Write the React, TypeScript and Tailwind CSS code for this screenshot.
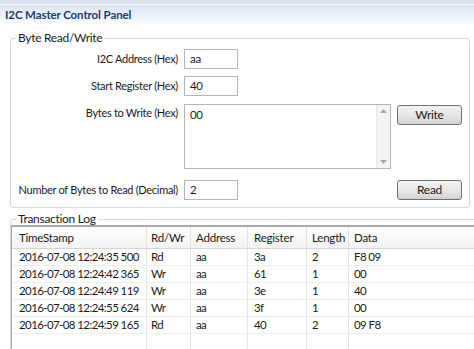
import React from "react";

interface LogRow {
  time: string;
  rw: string;
  address: string;
  register: string;
  length: string;
  data: string;
}

const rows: LogRow[] = [
  { time: "2016-07-08 12:24:35 500", rw: "Rd", address: "aa", register: "3a", length: "2", data: "F8 09" },
  { time: "2016-07-08 12:24:42 365", rw: "Wr", address: "aa", register: "61", length: "1", data: "00" },
  { time: "2016-07-08 12:24:49 119", rw: "Wr", address: "aa", register: "3e", length: "1", data: "40" },
  { time: "2016-07-08 12:24:55 624", rw: "Wr", address: "aa", register: "3f", length: "1", data: "00" },
  { time: "2016-07-08 12:24:59 165", rw: "Rd", address: "aa", register: "40", length: "2", data: "09 F8" },
];

const cols = [
  { key: "time", label: "TimeStamp", w: "w-[135px]", pl: "pl-[7px]" },
  { key: "rw", label: "Rd/Wr", w: "w-[44px]", pl: "pl-[4px]" },
  { key: "address", label: "Address", w: "w-[57px]", pl: "pl-[5px]" },
  { key: "register", label: "Register", w: "w-[59px]", pl: "pl-[6px]" },
  { key: "length", label: "Length", w: "w-[42px]", pl: "pl-[5px]" },
  { key: "data", label: "Data", w: "flex-1", pl: "pl-[5px]" },
] as const;

const WinButton: React.FC<{ label: string }> = ({ label }) => (
  <button className="w-[65px] h-[20px] rounded-[3px] border border-[#707070] bg-linear-to-b from-[#f3f3f3] via-[#e6e6e6] to-[#d3d3d3] text-[#1e1e1e] leading-[18px] text-[12px]">
    {label}
  </button>
);

const TextBox: React.FC<{ value: string }> = ({ value }) => (
  <div className="w-[54px] h-[20px] border border-[#b3b5ba] bg-white pl-[5px] leading-[18px] text-[#1e1e1e] text-[11.5px]">
    {value}
  </div>
);

export default function App() {
  return (
    <div className="w-[474px] h-[349px] overflow-hidden bg-white text-[11px] tracking-[-0.3px] whitespace-nowrap text-[#1a1a1a] font-['Lato',sans-serif]">
      {/* title bar */}
      <div className="h-[4px] bg-[#d9e2ec]" />
      <div className="h-[1px] bg-[#f6f8fb]" />
      <div className="h-[19px] bg-linear-to-b from-[#dbe5f0] to-[#fafcfe] pl-[5px] leading-[19px] text-[11.5px] font-bold tracking-[-0.1px] text-[#1d3a6c]">
        I2C Master Control Panel
      </div>

      {/* Byte Read/Write */}
      <fieldset className="mt-[7px] ml-[10px] w-[460px] rounded-[3px] border border-[#d3dce3] pt-[4px] pb-[7px]">
        <legend className="ml-[5px] px-[2px] leading-[14px] text-[12px]">Byte Read/Write</legend>
        <div className="flex flex-col">
          <div className="flex items-center">
            <div className="w-[167px] text-right">I2C Address (Hex)</div>
            <div className="ml-[6px]"><TextBox value="aa" /></div>
          </div>
          <div className="flex items-center mt-[7px]">
            <div className="w-[167px] text-right">Start Register (Hex)</div>
            <div className="ml-[6px]"><TextBox value="40" /></div>
          </div>
          <div className="flex items-start mt-[8px]">
            <div className="w-[167px] text-right pt-[1px]">Bytes to Write (Hex)</div>
            <div className="ml-[6px] w-[207px] h-[65px] border border-[#b3b5ba] flex">
              <div className="flex-1 pl-[5px] pt-[2px] leading-[16px] text-[11.5px]">00</div>
              <div className="w-[14px] bg-[#f4f4f4] border-l border-[#e8e8e8] flex flex-col justify-between items-center py-[4px]">
                <svg width="7" height="4" viewBox="0 0 7 4"><path d="M0 4 L3.5 0 L7 4 Z" fill="#a8a8a8" /></svg>
                <svg width="7" height="4" viewBox="0 0 7 4"><path d="M0 0 L3.5 4 L7 0 Z" fill="#a8a8a8" /></svg>
              </div>
            </div>
            <div className="ml-[6px] mt-[1px]"><WinButton label="Write" /></div>
          </div>
          <div className="flex items-center mt-[11px]">
            <div className="w-[167px] text-right">Number of Bytes to Read (Decimal)</div>
            <div className="ml-[6px] w-[207px]"><TextBox value="2" /></div>
            <div className="ml-[6px]"><WinButton label="Read" /></div>
          </div>
        </div>
      </fieldset>

      {/* Transaction Log */}
      <fieldset className="mt-[4px] ml-[10px] w-[480px] h-[150px] rounded-[3px] border border-[#d3dce3]">
        <legend className="ml-[5px] px-[2px] leading-[14px] text-[12px]">Transaction Log</legend>
        <div className="-mt-[1px] h-full border-t-2 border-l border-[#a8a8a8] flex flex-col text-[11.5px] tracking-[-0.6px]">
          <div className="flex h-[22px] border-b border-[#d5d5d5] bg-linear-to-b from-white to-[#f2f2f2] tracking-[-0.2px]">
            {cols.map((c, i) => (
              <div
                key={c.key}
                className={`${c.w} ${c.pl} leading-[21px] ${i < cols.length - 1 ? "border-r border-[#e2e2e2]" : ""}`}
              >
                {c.label}
              </div>
            ))}
          </div>
          <div className="flex-1 relative flex flex-col">
            {rows.map((r) => (
              <div key={r.time} className="flex h-[17px] border-b border-[#efefef]">
                {cols.map((c, i) => (
                  <div
                    key={c.key}
                    className={`${c.w} ${c.pl} leading-[16px] ${i < cols.length - 1 ? "border-r border-[#e6e6e6]" : ""}`}
                  >
                    {r[c.key]}
                  </div>
                ))}
              </div>
            ))}
            <div className="flex flex-1">
              {cols.map((c, i) => (
                <div key={c.key} className={`${c.w} ${i < cols.length - 1 ? "border-r border-[#e6e6e6]" : ""}`} />
              ))}
            </div>
          </div>
        </div>
      </fieldset>
    </div>
  );
}
